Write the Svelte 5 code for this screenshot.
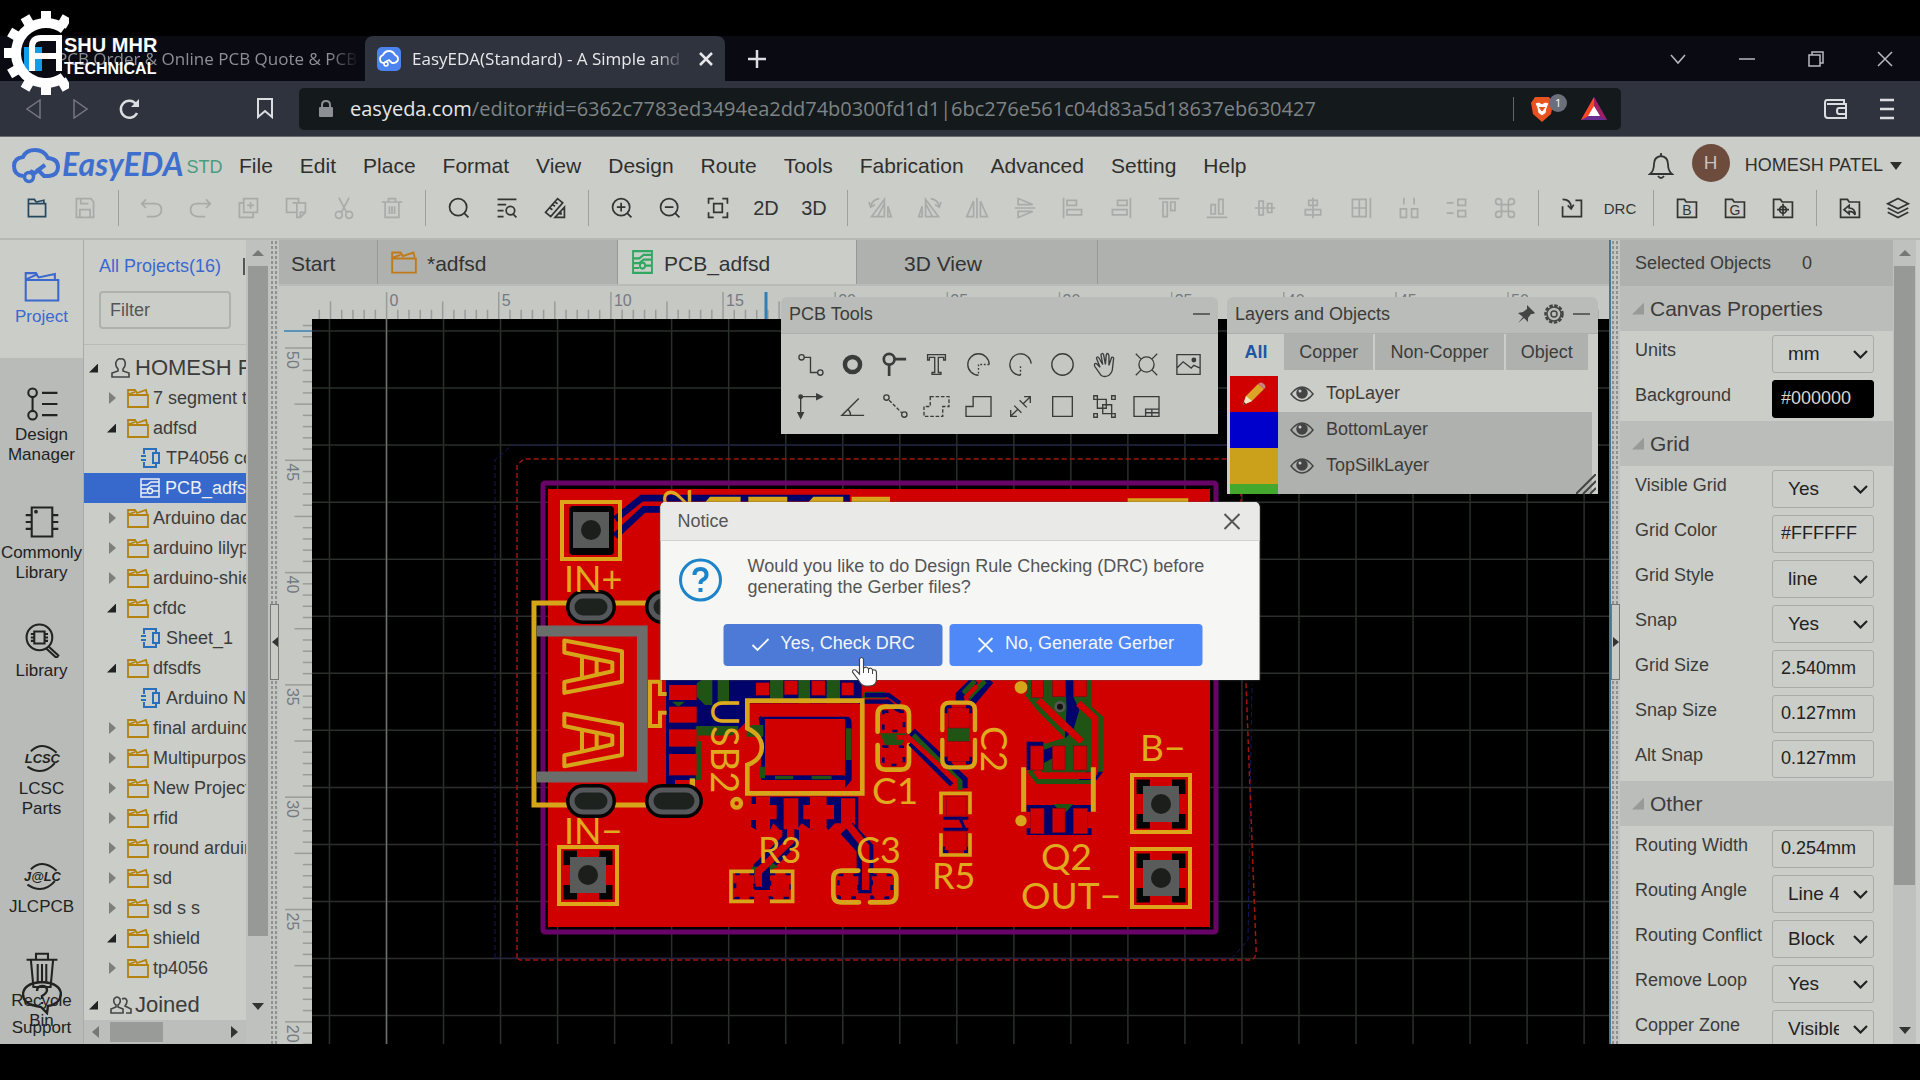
<script>
  const icons = {
    open: '<path d="M4 9V4h7l2 3M4 9h20v15H4zM13 7l9-2v4"/>',
    save: '<path d="M4 3h17l3 4v18H4zM9 3v6h9M8 25v-9h12v9"/>',
    undo: '<path d="M7 4L2 9l5 5M2 9h15q8 0 8 7t-8 8H8"/>',
    redo: '<path d="M21 4l5 5-5 5M26 9H11q-8 0-8 7t8 8h9"/>',
    dup: '<path d="M9 3h16v16H9zM9 8H4v17h16v-6M17 7v8M13 11h8"/>',
    copy: '<path d="M15 19H3V3h14v5M10 8h15v11l-6 6h-4V8M25 19h-6v6"/>',
    cut: '<path d="M8 2l9 17M20 2l-9 17"/><circle cx="8" cy="22" r="4"/><circle cx="20" cy="22" r="4"/>',
    trash: '<path d="M2 7h24M10 7V3h8v4M6 7v18h16V7M11 12v9M14 12v9M17 12v9"/>',
    search: '<circle cx="13" cy="13" r="10"/><path d="M20 20l5 5"/>',
    find: '<path d="M3 4h22M3 10h10M3 17h7M3 24h7"/><circle cx="18" cy="17" r="5"/><path d="M21 21l4 4"/>',
    measure: '<path d="M3 19L17 3l6 5L9 24zM14 7l3 2M11 10l3 2M8 14l3 2M25 13v12H14zM21 19v2h-2"/>',
    zin: '<circle cx="13" cy="13" r="10"/><path d="M20 20l5 5M13 8v10M8 13h10"/>',
    zout: '<circle cx="13" cy="13" r="10"/><path d="M20 20l5 5M8 13h10"/>',
    fit: '<path d="M3 9V3h6M19 3h6v6M25 19v6h-6M9 25H3v-6M9 9h10v10H9z"/>',
    rotl: '<path d="M18 4v20H3zM2 12q2-8 10-9M0 7l2 6 5-3M18 9L10 24h8zM22 12v12h4z"/>',
    rotr: '<path d="M10 24V4l15 20zM26 12q-2-8-10-9M28 7l-2 6-5-3M10 9l8 15h-8zM6 12v12H2z"/>',
    fliph: '<path d="M14 2v24M10 6v18H2zM18 6v18h8z"/>',
    flipv: '<path d="M2 14h24M6 10V3l17 7zM6 18v7l17-7z"/>',
    al: '<path d="M3 2v24M7 5h11v6H7zM7 16h17v6H7z"/>',
    ar: '<path d="M25 2v24M21 5H10v6h11zM21 16H4v6h17z"/>',
    at: '<path d="M2 3h24M7 7h5v17H7zM16 7h5v10h-5z"/>',
    ab: '<path d="M2 25h24M7 21h5V10H7zM16 21h5V4h-5z"/>',
    cv: '<path d="M2 14h24M7 6h5v16H7zM17 9h5v10h-5z"/>',
    ch: '<path d="M14 2v24M9 5h10v6H9zM5 16h18v6H5z"/>',
    gr: '<path d="M4 4h16v20H4zM4 14h16M12 4v20M25 2v24"/>',
    dh: '<path d="M4 15h7v10H4zM17 15h7v10h-7zM8 2v8M20 2v8"/>',
    dv: '<path d="M15 4h9v7h-9zM15 17h9v7h-9zM2 8h8M2 20h8"/>',
    di: '<path d="M10 10h8v8h-8zM10 10H6.500A3.500 3.500 0 1 1 10 6.500zM18 10h3.500A3.500 3.500 0 1 0 18 6.500zM10 18H6.500A3.500 3.500 0 1 0 10 21.500zM18 18h3.500A3.500 3.500 0 1 1 18 21.500z"/>',
    imp: '<path d="M3 12v12h22V5h-7M3 4q10 0 10 10M9 11l4 4 3-5"/>',
    fb: '<path d="M3 25V4h8l2 3h12v18z"/>',
    target: '<path d="M3 25V4h8l2 3h12v18zM14 9v14M7 16h14"/><circle cx="14" cy="16" r="4"/>',
    share: '<path d="M3 25V4h8l2 3h12v18zM13 11l-6 5 6 5v-3q5 0 7 4 0-8-7-8z"/>',
    layers: '<path d="M14 3l12 6-12 6L2 9zM2 14l12 6 12-6M2 19l12 6 12-6"/>',
    track: '<circle cx="4" cy="6" r="3"/><path d="M7 6h7v17h8"/><circle cx="25" cy="23" r="3"/>',
    pad: '<circle cx="14" cy="14" r="8.5" stroke-width="5"/>',
    via: '<g stroke-width="3"><circle cx="8" cy="8" r="6"/><path d="M14 8h13M8 14v13"/></g>',
    text: '<path d="M4 3h20v6h-2V6h-6v17h3v2H9v-2h3V6H6v3H4z"/>',
    arc1: '<path d="M14 26A12 12 0 1 1 26 14"/><path d="M26 14H14V26" stroke-dasharray="2 2"/>',
    arc2: '<path d="M14 26A12 12 0 1 1 26 13"/><path d="M14 26V14" stroke-dasharray="2 2"/>',
    circ: '<circle cx="14" cy="14" r="12"/>',
    hand: '<path d="M10 26L3 16q-1-4 2-3l4 4-4-10q1-3 3 0l4 7-2-11q2-3 3 0l2 11 1-11q2-3 3 1l0 11 3-9q3-1 2 3l-1 9q0 5-4 8-5 3-9 0z"/>',
    hole: '<circle cx="14" cy="14" r="8.5"/><path d="M2 2l6 6M26 2l-6 6M2 26l6-6M26 26l-6-6"/>',
    image: '<path d="M1 3h26v22H1zM1 18l7-7 9 7 3-3 7 3"/><circle cx="20" cy="9" r="2" fill="currentColor"/>',
    axis: '<circle cx="3" cy="3" r="2" fill="currentColor"/><path d="M3 3h22M3 3v22"/><path d="M21 0l6 3-6 3zM0 21l3 6 3-6z" fill="currentColor"/>',
    angle: '<path d="M21 5L2 24h25M9 17q3 3 3 7"/>',
    rats: '<circle cx="5" cy="4" r="3"/><circle cx="25" cy="23" r="3"/><path d="M8 7l14 14" stroke-dasharray="4 2"/>',
    region: '<path d="M7 3h21v11h-7v11H0V14h7z" stroke-dasharray="4 2"/>',
    solid: '<path d="M8 3h20v22H0V14h8z"/>',
    dim: '<path d="M3 25l8-8M17 11l8-8M18 3h7v7M3 18v7h7M7 13l8 8M13 7l8 8"/>',
    rect: '<path d="M3 3h22v22H3z"/>',
    group: '<path d="M6 6h10v10H6zM12 12h10v10H12zM2 2h4v4H2zM22 2h4v4h-4zM2 22h4v4H2zM22 22h4v4h-4z"/>',
    panel: '<path d="M0 3h28v22H0zM13 25v-8h15M13 21h15M20 17v8"/>'
  };

  const toolbar = [
    ['open', 'Open', 1], ['save', 'Save', 0], null,
    ['undo', 'Undo', 0], ['redo', 'Redo', 0], ['dup', 'Duplicate', 0], ['copy', 'Copy', 0], ['cut', 'Cut', 0], ['trash', 'Delete', 0], null,
    ['search', 'Search', 1], ['find', 'Find', 1], ['measure', 'Measure', 1], null,
    ['zin', 'Zoom in', 1], ['zout', 'Zoom out', 1], ['fit', 'Fit', 1], ['', '2D', 1], ['', '3D', 1], null,
    ['rotl', 'Rotate left', 0], ['rotr', 'Rotate right', 0], ['fliph', 'Flip horizontal', 0], ['flipv', 'Flip vertical', 0],
    ['al', 'Align left', 0], ['ar', 'Align right', 0], ['at', 'Align top', 0], ['ab', 'Align bottom', 0], ['cv', 'Align middle', 0],
    ['ch', 'Align center', 0], ['gr', 'Align grid', 0], ['dh', 'Distribute horizontally', 0], ['dv', 'Distribute vertically', 0], ['di', 'Distribute array', 0], null,
    ['imp', 'Import changes', 1], ['', 'DRC', 1], null,
    ['fb', 'BOM', 1, 'B'], ['fb', 'Gerber', 1, 'G'], ['target', 'Pick and place', 1], null,
    ['share', 'Share', 1], ['layers', 'Layers', 1]
  ];
  const menus = ['File', 'Edit', 'Place', 'Format', 'View', 'Design', 'Route', 'Tools', 'Fabrication', 'Advanced', 'Setting', 'Help'];
  const pcbTools = ['track', 'pad', 'via', 'text', 'arc1', 'arc2', 'circ', 'hand', 'hole', 'image', 'axis', 'angle', 'rats', 'region', 'solid', 'dim', 'rect', 'group', 'panel'];

  const railItems = [
    { label: 'Project', icon: '<path d="M2 38V6h12l3 5 19-4v7M2 14h38v24H2zM3 13L14 8"/>' },
    { label: 'Design Manager', icon: '<circle cx="10" cy="8" r="5"/><circle cx="10" cy="34" r="5"/><path d="M10 13v16M21 8h18M21 21h18M21 34h18"/>' },
    { label: 'Commonly Library', icon: '<path d="M9 4h24v34H9zM2 13h7M2 21h7M2 29h7M33 13h7M33 21h7M33 29h7"/><circle cx="14" cy="9" r="1"/>' },
    { label: 'Library', icon: '<circle cx="18" cy="18" r="15"/><path d="M29 29l11 10-2 3L26 31M12 11h12v14H12zM8 14h4M8 18h4M8 22h4M24 14h4M24 18h4M24 22h4"/>' },
    { label: 'LCSC Parts', icon: '<path d="M8 13Q22 0 38 15M4 31q18 12 32-4"/><text x="1" y="27">LCSC</text>' },
    { label: 'JLCPCB', icon: '<path d="M8 13Q22 0 38 15M4 31q18 12 32-4"/><text x="0" y="27">J@LC</text>' },
    { label: 'Recycle Bin', icon: '<path d="M3 9h36M14 9V2h14v7M8 9l3 32h20l3-32M16 14v22M21 14v22M26 14v22"/>' }
  ];

  const tree = [
    ['root', 'HOMESH PATEL', 1], ['dir', '7 segment timer', 0], ['dir', 'adfsd', 1], ['sch', 'TP4056 copy'], ['pcb', 'PCB_adfsd'],
    ['dir', 'Arduino dac', 0], ['dir', 'arduino lilypad', 0], ['dir', 'arduino-shield', 0], ['dir', 'cfdc', 1], ['sch', 'Sheet_1'],
    ['dir', 'dfsdfs', 1], ['sch', 'Arduino Nano'], ['dir', 'final arduino', 0], ['dir', 'Multipurpose', 0], ['dir', 'New Project', 0],
    ['dir', 'rfid', 0], ['dir', 'round arduino', 0], ['dir', 'sd', 0], ['dir', 'sd s s', 0], ['dir', 'shield', 1], ['dir', 'tp4056', 0], ['team', 'Joined', 1]
  ];

  const groups = [
    ['Canvas Properties', [['Units', 'mm', 's'], ['Background', '#000000', 'dark']]],
    ['Grid', [['Visible Grid', 'Yes', 's'], ['Grid Color', '#FFFFFF'], ['Grid Style', 'line', 's'], ['Snap', 'Yes', 's'], ['Grid Size', '2.540mm'], ['Snap Size', '0.127mm'], ['Alt Snap', '0.127mm']]],
    ['Other', [['Routing Width', '0.254mm'], ['Routing Angle', 'Line 45', 's'], ['Routing Conflict', 'Block', 's'], ['Remove Loop', 'Yes', 's'], ['Copper Zone', 'Visible', 's']]]
  ];

  const layers = [['TopLayer', 'red'], ['BottomLayer', 'blue'], ['TopSilkLayer', 'gold'], ['', 'green']];

  const range = (a, b) => Array.from({ length: b - a + 1 }, (_, i) => a + i);
  const tick = (i, base) => (i % 10 === 0 ? base : i % 5 === 0 ? base * 0.65 : base * 0.34);
  const xTicks = range(-6, 108).map((i) => ({ p: 386.6 + 11.215 * i, n: tick(i, 27), label: i % 10 === 0 ? i / 2 : null }));
  const yTicks = range(-2, 62).map((i) => ({ p: 348 + 11.23 * i, n: tick(i, 27), label: i % 10 === 0 ? 50 - i / 2 : null }));
  const gridX = range(-1, 21).map((k) => 386.5 + 57.03 * k);
  const gridY = range(0, 12).map((k) => 331 + 57.05 * k);

  const pads = [
    { x: 560, y: 500, w: 62, h: 61, px: 573, py: 512, solid: true },
    { x: 557, y: 845, w: 62, h: 61, px: 570, py: 857 },
    { x: 1130, y: 773, w: 62, h: 61, px: 1143, py: 786 },
    { x: 1130, y: 847, w: 62, h: 62, px: 1143, py: 860 }
  ];
  const slots = [[591, 607, 42], [674, 607, 50], [591, 801, 42], [674, 801, 50]];
  const silk = [
    ['IN+', 564, 592, 36], ['IN−', 564, 844, 36], ['C1', 872, 804, 37], ['C3', 856, 863, 36], ['R3', 758, 863, 36],
    ['R5', 932, 889, 36], ['Q2', 1041, 870, 37], ['OUT−', 1021, 909, 37], ['B−', 1140, 761, 37]
  ];
</script>

{#snippet icon(name, size = 28)}
  <svg class="ico" width={size} height={size} viewBox="0 0 28 28">{@html icons[name]}</svg>
{/snippet}

{#snippet folder()}
  <svg class="folder" width="22" height="20" viewBox="0 0 22 20"><path d="M1 19V2h7l2 3 9-3 1 4M1 7h20v12H1zM2 6l6-2" /></svg>
{/snippet}

{#snippet pcbIcon()}
  <svg class="pcbi" width="21" height="24" viewBox="0 0 20 20" preserveAspectRatio="none"><path d="M1 1h18v18H1zM1 7h6l4-3h8M1 11h6l4-3h8M1 15h6M13 13h6" /><circle cx="10" cy="13" r="2.500" /></svg>
{/snippet}

<div class="page">
  <header class="browser">
    <div class="strip">
      <div class="tab back"><span class="fav"></span><span class="ttl">PCB Order &amp; Online PCB Quote &amp; PCB Assembly</span></div>
      <div class="tab front">
        <svg width="24" height="24" viewBox="0 0 24 24"><rect width="24" height="24" rx="5" fill="#4d83ee" /><path d="M7 16q-4 0-4-4 0-3 3-4 2-4 6-4t6 4q3 1 3 4t-4 4h-2l-3-3-4 2" fill="none" stroke="#fff" stroke-width="1.800" /><circle cx="9" cy="17" r="2" fill="none" stroke="#fff" stroke-width="1.500" /></svg>
        <span class="ttl">EasyEDA(Standard) - A Simple and Powerful</span>
        <button aria-label="Close tab"><svg width="14" height="14" viewBox="0 0 14 14"><path d="M1 1l12 12M13 1L1 13" stroke-width="2.500" /></svg></button>
      </div>
      <button class="plus" aria-label="New tab"><svg width="18" height="18" viewBox="0 0 18 18"><path d="M9 0v18M0 9h18" stroke-width="2.500" /></svg></button>
      <div class="win">
        <button aria-label="Tab list"><svg width="16" height="16" viewBox="0 0 16 16"><path d="M1 4l7 8 7-8" /></svg></button>
        <button aria-label="Minimize"><svg width="16" height="16" viewBox="0 0 16 16"><path d="M0 8h16" /></svg></button>
        <button aria-label="Restore"><svg width="16" height="16" viewBox="0 0 16 16"><path d="M1 4h11v11H1zM4 4V1h11v11h-3" /></svg></button>
        <button aria-label="Close"><svg width="16" height="16" viewBox="0 0 16 16"><path d="M1 1l14 14M15 1L1 15" /></svg></button>
      </div>
    </div>
    <nav class="nav">
      <button class="dim" aria-label="Back"><svg width="16" height="20" viewBox="0 0 16 20"><path d="M14 1v18L1 10z" /></svg></button>
      <button class="dim" aria-label="Forward"><svg width="16" height="20" viewBox="0 0 16 20"><path d="M2 1v18l13-9z" /></svg></button>
      <button aria-label="Reload"><svg width="22" height="22" viewBox="0 0 22 22"><path d="M19 15a8.500 8.500 0 1 1-1-9" stroke-width="2.500" /><path d="M21 1v8h-8z" fill="#dcdde0" stroke="none" /></svg></button>
      <button class="mark" aria-label="Bookmark"><svg width="16" height="21" viewBox="0 0 16 21"><path d="M1 1h14v18l-7-6-7 6z" stroke-width="2" /></svg></button>
      <div class="url">
        <svg width="14" height="17" viewBox="0 0 14 17"><path d="M3 8V5q0-4 4-4t4 4v3" stroke="#8c9094" stroke-width="2" fill="none" /><rect y="7" width="14" height="10" rx="1" fill="#8c9094" /></svg>
        <span class="addr"><b>easyeda.com</b>/editor#id=6362c7783ed3494ea2dd74b0300fd1d1|6bc276e561c04d83a5d18637eb630427</span>
        <span class="bar"></span>
        <svg class="lion" width="38" height="30" viewBox="0 0 38 30"><path d="M4 3h14l4 6-2 11-9 8-9-8L0 9z" fill="#e8521f" /><path d="M4 9l4-1 3 2 3-2 4 1-2 5-1 5-4 3-4-3-1-5zM8 13l3 4 3-4" fill="#fff" stroke="#e8521f" /><circle cx="27" cy="9" r="9" fill="#6b6f7a" /><text x="24" y="13" font-size="11" fill="#fff">1</text></svg>
        <svg width="26" height="24" viewBox="0 0 26 24"><path d="M13 0L0 23h26z" fill="#6a2d91" /><path d="M13 0L0 23l13-7z" fill="#ff4724" /><path d="M13 0l13 23-13-7z" fill="#9e1f63" /><path d="M13 9l-6 10h12z" fill="#fff" /></svg>
      </div>
      <div class="navright">
        <button aria-label="Wallet"><svg width="24" height="21" viewBox="0 0 24 21"><path d="M20 6V2H3Q1 2 1 5v12q0 3 3 3h18V6H3M22 10h-7q-2 0-2 3t2 3h7" stroke-width="2" /></svg></button>
        <button aria-label="Menu"><svg width="16" height="22" viewBox="0 0 16 22"><path d="M1 2h14M1 11h14M1 20h14" stroke-width="2.500" /></svg></button>
      </div>
    </nav>
  </header>

  <div class="head">
    <div class="menurow">
      <div class="brand">
        <svg width="48" height="36" viewBox="0 0 48 36"><path d="M11 28Q2 27 2 18q0-8 9-9Q14 2 23 2q9 0 13 8 10 1 10 9 0 8-9 9h-5l-6-6 7-5-10 8-5-2" fill="none" stroke="#3f6fce" stroke-width="4" /><circle cx="17" cy="29" r="4.500" fill="none" stroke="#3f6fce" stroke-width="3.500" /></svg>
        <span class="name">EasyEDA</span><span class="std">STD</span>
      </div>
      <div class="menus">{#each menus as m}<button>{m}</button>{/each}</div>
      <div class="user">
        <svg width="26" height="28" viewBox="0 0 26 28"><path d="M2 22q4-3 4-10 0-7 7-8 7 1 7 8 0 7 4 10zM13 4V1M10 24q3 4 6 0" fill="none" stroke="#333" stroke-width="1.800" /></svg>
        <span class="ava">H</span><button>HOMESH PATEL</button><i class="caret"></i>
      </div>
    </div>
    <div class="toolbar">
      {#each toolbar as t}
        {#if t}
          <button class:off={!t[2]} class:small={t[1] === 'DRC'} class:teal={t[0] === 'open'} aria-label={t[1]}>
            {#if t[0]}{@render icon(t[0])}{#if t[3]}<span class="in">{t[3]}</span>{/if}{:else}{t[1]}{/if}
          </button>
        {:else}<span class="sep"></span>{/if}
      {/each}
    </div>
  </div>

  <main class="work">
    <aside class="rail">
      {#each railItems as r, i}
        <button class:on={i === 0} class:last={i === 6}>
          <svg width="40" height="36" viewBox="0 0 42 42">{@html r.icon}</svg><span>{r.label}</span>
        </button>
      {/each}
      <button class="support">
        <svg width="40" height="34" viewBox="0 0 40 34"><path d="M14 25Q1 23 1 13 2 2 20 1q18 1 19 12-1 10-13 12l-1 7-6-6zM15 10q0-5 5-5t5 4q0 3-5 6v3M20 21v2" /></svg><span>Support</span>
      </button>
    </aside>

    <section class="side">
      <div class="filter"><a href="#all">All Projects(16)</a><i></i><input aria-label="Filter" placeholder="Filter" /></div>
      <ul>
        {#each tree as [kind, label, open]}
          <li class={kind}>
            {#if open !== undefined}<i class={open ? 'tri open' : 'tri'}></i>{/if}
            {#if kind === 'dir'}{@render folder()}
            {:else if kind === 'sch'}<svg class="schi" width="20" height="22" viewBox="0 0 20 22"><path d="M3 7V2h12v4M3 15v5h12v-4M0 9h5M0 13h5M12 6h6v10h-6z" /></svg>
            {:else if kind === 'pcb'}{@render pcbIcon()}
            {:else if kind === 'root'}<svg class="man" width="19" height="20" viewBox="0 0 19 20"><path d="M7 11Q4 8 5 4q2-4 4.500-3Q13 0 14 4q1 4-2 7v2l6 2v4H1v-4l6-2z" /></svg>
            {:else}<svg class="man" width="22" height="18" viewBox="0 0 22 18"><path d="M6 9Q3 7 4 3q3-4 6 0 1 4-2 6v2l5 2v4H1v-4l5-2zM12 3q4-2 5 2 0 3-2 5l6 3v4h-5" /></svg>{/if}
            <span>{label}</span>
          </li>
        {/each}
      </ul>
      <div class="hbar"><i class="l"></i><b></b><i class="r"></i></div>
    </section>
    <div class="vbar left"><i class="u"></i><b></b><i class="d"></i></div>
    <div class="split"><span class="toleft"></span></div>

    <section class="editor">
      <div class="tabs">
        <button class="t1">Start</button>
        <button class="t2">{@render folder()}*adfsd</button>
        <button class="t3">{@render pcbIcon()}PCB_adfsd</button>
        <button class="t4">3D View</button>
      </div>
      <div class="stage">
        <svg class="canvas" width="100%" height="100%">
          <g transform="translate(-279 -286)">
            <g stroke="#9a9c99" stroke-width="1.500">
              {#each xTicks as t}<path d={`M${t.p} ${319 - t.n}V319`} />{/each}
              {#each yTicks as t}<path d={`M${312 - t.n} ${t.p}H312`} />{/each}
            </g>
            <path d="M766 292V319" stroke="#2f7fb8" stroke-width="3" />
            <path d="M284 331H312" stroke="#5a94ba" stroke-width="2" />
            <g class="num">
              {#each xTicks as t}{#if t.label !== null}<text x={t.p + 3} y="306">{t.label}</text>{/if}{/each}
              {#each yTicks as t}{#if t.label !== null}<text transform={`translate(287 ${t.p + 3}) rotate(90)`}>{t.label}</text>{/if}{/each}
            </g>
            <rect x="312" y="319" width="4000" height="3000" fill="#000" />
            <g stroke="#2a2f2b" stroke-width="1.500">
              {#each gridX as x}<path d={`M${x} 319V2400`} />{/each}
              {#each gridY as y}<path d={`M312 ${y}H2400`} />{/each}
              <path d="M386.500 319V2400" stroke="#6a6f6b" />
            </g>
            <path d="M495 958V460L512 445H1240M495 958H1232L1248 940L1252 684" fill="none" stroke="#16165c" stroke-dasharray="5 3" />
            <path d="M517 958V465L524 459H1235L1241 465V560L1246 683L1256 947Q1257 960 1250 960H520Z" fill="none" stroke="#a01510" stroke-width="1.500" stroke-dasharray="5 3" />
            <rect x="543" y="483" width="673" height="449" rx="2" fill="none" stroke="#680468" stroke-width="5" />
            <rect x="548" y="489" width="662" height="438" fill="#d10000" />

            <g transform="translate(500 440) scale(.3333 .338)" fill="none">
              <path d="M345 235L425 172H1050M345 285L432 205H480" stroke="#02026b" stroke-width="20" />
              <path d="M610 190L630 168H722V190ZM745 168H862V190H745ZM920 190L940 168H1030V190ZM1055 168H1170V190H1055Z" fill="#d6a51a" />
              <path d="M535 482H102V1080H535" stroke="#d6a51a" stroke-width="15" />
              <path d="M110 565H427V997H110" stroke="#6a6d69" stroke-width="32" />
              {#each [0, 217] as dy}
                <g transform={`translate(0 ${dy})`} stroke="#d6a51a" stroke-width="12" stroke-linejoin="round">
                  <path d="M193 593L366 625V715L193 748V716L246 705V640L193 629Z" />
                  <path d="M246 640L337 658V684L246 705M290 650V694" />
                </g>
              {/each}
            </g>

            <g transform="translate(655 670) scale(.3333)">
              <path d="M33 30H620V110H275V170L240 205H130V330H60V360H33Z" fill="#02026b" />
              <path d="M140 30H172V105H150L125 80V40ZM188 30H222V105H188ZM345 30H385V85H345ZM430 30H465V110H430ZM515 30H555V110H515ZM125 168H250V198H125ZM122 170H140V330H122ZM50 95H90L70 110ZM630 65H690V85H620Z" fill="#1f5414" />
              <path d="M145 222H290V340H145Z" fill="#d10000" />
              <path d="M275 100H620V370H275V285Q330 260 325 220Q320 180 275 170Z" fill="#d10000" />
              <path d="M308 125L318 140H580Q590 145 590 160V330L570 355V330H318V190Z" fill="#02026b" />
              <path d="M275 165H325V200H275ZM315 290H330V325H315ZM360 318H415V328H360ZM470 318H530V328H470ZM573 175H590V270H573Z" fill="#1f5414" />
              <path d="M130 205H235L318 125H575Q600 130 600 160V340" fill="none" stroke="#d10000" stroke-width="17" />
              <rect x="330" y="147" width="240" height="169" fill="#d10000" />
              {#each [[42, 45, 83, 45], [42, 110, 83, 48], [42, 178, 83, 52], [42, 252, 83, 64], [303, 38, 40, 38], [388, 32, 40, 42], [470, 32, 40, 44], [560, 38, 36, 38]] as p}
                <rect x={p[0]} y={p[1]} width={p[2]} height={p[3]} fill="#d10000" />
              {/each}
              <path d="M0 35H15V72H35M35 128H15V168H-15V35H0" fill="none" stroke="#d6a51a" stroke-width="12" />
              <path d="M610 95H700L740 130M630 75H700L735 100" fill="none" stroke="#02026b" stroke-width="13" />
              <path d="M277 92H622V370H277V285C335 265 335 200 277 175Z" fill="none" stroke="#d6a51a" stroke-width="14" />
              <path d="M290 380H610V478H595L570 460H540L520 480L500 462L470 480L440 460L425 480H375L355 460L345 480L320 462L305 480L288 470Z" fill="#02026b" />
              <path d="M286 402H303V450H286ZM303 380H345V405H365V448H345V478H303ZM386 385H430V478H386ZM445 405H465V380H515V405H537V448H515V478H465V448H445ZM558 385H600V470H558Z" fill="#d10000" />
              <path d="M407 480V510L320 595V660M575 475L630 535V670" fill="none" stroke="#02026b" stroke-width="50" />
              <path d="M290 590H315V620H290ZM340 570L370 590L345 600Z" fill="#1f5414" />
              <path d="M407 465V512L310 605V650M580 465L632 530V660" fill="none" stroke="#d10000" stroke-width="22" />
              {#each [[240, 612, 58, 72], [345, 612, 62, 72], [550, 615, 60, 68], [650, 615, 60, 68], [685, 125, 62, 58], [685, 230, 62, 55]] as p}
                <rect x={p[0]} y={p[1]} width={p[2]} height={p[3]} fill="#d10000" stroke="#02026b" stroke-width="8" stroke-dasharray={`${p[2] / 4} ${p[2] / 2}`} />
              {/each}
              <path d="M675 190H755L740 225H690Z" fill="#1f5414" />
              <path d="M297 604H228V694H297M345 604H413V694H345" fill="none" stroke="#d6a51a" stroke-width="11" />
              <path d="M610 602H560Q535 602 535 625V672Q535 697 560 697H612M645 602H698Q724 602 724 625V672Q724 697 698 697H645M668 185V135Q668 110 692 110H738Q762 110 762 135V185M668 225V275Q668 299 692 299H738Q762 299 762 275V225" fill="none" stroke="#d6a51a" stroke-width="14" stroke-linecap="round" />
              <circle cx="245" cy="400" r="13" fill="none" stroke="#d6a51a" stroke-width="13" />
              <path d="M112 325V352" stroke="#d6a51a" stroke-width="16" />
            </g>

            <g transform="translate(860 480) scale(.3333)">
              <path d="M803 55H985V70H803Z" fill="#d6a51a" />
              <path d="M155 755L310 900V925M300 668V645L345 600M390 600L335 665" fill="none" stroke="#02026b" stroke-width="26" />
              <path d="M150 790L275 915" stroke="#02026b" stroke-width="14" />
              <path d="M160 765L300 905V930M345 603L310 640M375 603L325 655" fill="none" stroke="#1f5414" stroke-width="15" />
              <path d="M110 772H145L290 905M350 618L315 655" fill="none" stroke="#d10000" stroke-width="14" />
              <path d="M262 740H330V785H262Z" fill="#1f5414" />
              <path d="M550 600H695V680L730 710V870L700 912H530L505 880V790H560L640 760L540 680L500 640V600Z" fill="#1f5414" />
              <path d="M535 680L625 770L560 790H500V700Z" fill="#d10000" />
              <path d="M500 640L540 690L625 775" fill="none" stroke="#1f5414" stroke-width="14" />
              <path d="M615 600H640V650L658 690L640 750L615 775L620 680ZM500 785H550V800H515V870H500ZM550 810L578 800V835L550 850ZM655 900H710L730 875H680Z" fill="#02026b" />
              <path d="M535 660L665 785M655 670L705 715V865Q705 885 690 887H540L528 870" fill="none" stroke="#d10000" stroke-width="20" />
              <path d="M500 975H695V1065H500Z" fill="#02026b" /><path d="M580 972H640L610 1005Z" fill="#1f5414" />
              <path d="M495 995H515V1045H495ZM680 995H700V1045H680Z" fill="#d10000" />
              {#each [[515, 600, 36, 52], [578, 600, 38, 50], [642, 600, 38, 50], [512, 798, 38, 72], [578, 798, 37, 72], [640, 798, 40, 72], [512, 985, 40, 76], [578, 985, 37, 72], [640, 985, 42, 76], [265, 682, 65, 62], [262, 785, 68, 60], [260, 950, 58, 58], [257, 1055, 62, 58]] as p}
                <rect x={p[0]} y={p[1]} width={p[2]} height={p[3]} fill="#d10000" stroke="#8d0018" stroke-width="2" />
              {/each}
              <path d="M250 1015H325M250 1048H325M300 1015L315 1048M250 1100V1115H265M312 1115H325V1100" fill="none" stroke="#02026b" stroke-width="9" />
              <path d="M258 700V680H275M318 680H332V700M258 830V848H275M318 848H332V830" fill="none" stroke="#02026b" stroke-width="9" />
              <circle cx="600" cy="680" r="13" fill="#111" stroke="#555855" stroke-width="8" />
              <path d="M247 750V690Q247 668 270 668H322Q345 668 345 690V750M247 780V840Q247 862 270 862H322Q345 862 345 840V780" fill="none" stroke="#d6a51a" stroke-width="13" stroke-linecap="round" />
              <path d="M243 1003V940H330V1003M243 1060V1125H330V1060" fill="none" stroke="#d6a51a" stroke-width="11" />
              <path d="M491 862V995M700 862V995" stroke="#d6a51a" stroke-width="15" />
              <circle cx="483" cy="622" r="19" fill="#d6a51a" /><circle cx="483" cy="1022" r="17" fill="#d6a51a" />
            </g>

            {#each slots as [x, y, w]}
              <rect x={x - w / 2 - 4} y={y - 17} width={w + 8} height="34" rx="17" fill="#050505" />
              <rect x={x - w / 2 + 2} y={y - 11} width={w - 4} height="22" rx="11" fill="#1e221e" stroke="#55575a" stroke-width="5" />
            {/each}
            {#each pads as p}
              <rect x={p.x + 2} y={p.y + 2} width={p.w - 4} height={p.h - 4} fill="none" stroke="#dca51a" stroke-width="4" />
              {#if p.solid}<rect x={p.px - 4} y={p.py - 6} width="45" height="49" rx="4" fill="#050505" />
              {:else}<path d={`M${p.px - 3} ${p.py + 8}v-11h10M${p.px + 29} ${p.py - 3}h10v11M${p.px + 39} ${p.py + 28}v11h-10M${p.px + 7} ${p.py + 39}h-10v-11`} fill="none" stroke="#050505" stroke-width="7" />{/if}
              <rect x={p.px} y={p.py} width="36" height="36" fill="#595b5a" /><circle cx={p.px + 18} cy={p.py + 18} r="10" fill="#1b1e1b" />
            {/each}
            <g class="silk">
              {#each silk as [s, x, y, f]}<text {x} {y} font-size={f}>{s}</text>{/each}
              <text transform="translate(711 698) rotate(90)" font-size="38">USB2</text>
              <text transform="translate(981 726) rotate(90)" font-size="37">C2</text>
              <text transform="translate(691 510) rotate(-90)" font-size="38">2</text>
            </g>
          </g>
        </svg>

        <div class="float tools">
          <div class="fh"><span>PCB Tools</span><button aria-label="Collapse tools"><svg width="17" height="4"><path d="M0 2h17" /></svg></button></div>
          <div class="grid">{#each pcbTools as t}<button aria-label={t}>{@render icon(t)}</button>{/each}</div>
        </div>

        <div class="float lay">
          <div class="fh">
            <span>Layers and Objects</span>
            <button aria-label="Pin"><svg width="18" height="18" viewBox="0 0 18 18"><path d="M10 0l8 8-2 1-2 0-3 4 0 4-4-4-6 5 5-6-5-4 5-1 4-3z" fill="#444" stroke="none" /></svg></button>
            <button aria-label="Layer settings"><svg width="20" height="20" viewBox="0 0 20 20"><circle cx="10" cy="10" r="8.500" stroke-dasharray="3.500 1.500" stroke-width="2.500" /><circle cx="10" cy="10" r="7" /><circle cx="10" cy="10" r="3" /></svg></button>
            <button aria-label="Collapse layers"><svg width="17" height="4"><path d="M0 2h17" /></svg></button>
          </div>
          <div class="ltabs"><button class="on">All</button><button>Copper</button><button>Non-Copper</button><button>Object</button></div>
          <div class="rows">
            {#each layers as [name, c], i}
              <div class="row" class:act={i === 0}>
                <span class={'sw ' + c}>
                  {#if i === 0}<svg width="26" height="26" viewBox="0 0 26 26"><path d="M2 24l3-9L17 3l6 5L11 20z" fill="#dba628" /><path d="M17 3q3-3 6 0t0 5z" fill="#c98080" /><path d="M2 24l3-9 6 5z" fill="#eee6c8" /><path d="M2 24l1-3 2 2z" fill="#222" /></svg>{/if}
                </span>
                {#if name}
                  <svg class="eye" width="24" height="16" viewBox="0 0 24 16"><path d="M1 8q11-14 22 0-11 14-22 0z" /><circle cx="12" cy="7" r="5" fill="#444" /><circle cx="10" cy="5" r="1.500" fill="#ccc" stroke="none" /></svg>
                  <span class="ln">{name}</span>
                {/if}
              </div>
            {/each}
          </div>
          <svg class="grip" width="20" height="20" viewBox="0 0 20 20"><path d="M0 20L20 0M7 20L20 7M14 20l6-6" /></svg>
        </div>
      </div>
    </section>

    <div class="split"><span class="toright"></span></div>
    <aside class="props">
      <div class="sel"><span>Selected Objects</span><span>0</span></div>
      {#each groups as [title, rows]}
        <h3><i></i>{title}</h3>
        {#each rows as [label, value, type]}
          <label class="prop"><span>{label}</span>
            {#if type === 's'}
              <span class="dd"><select><option>{value}</option></select><svg width="15" height="9" viewBox="0 0 15 9"><path d="M1 1l6.500 6.500L14 1" /></svg></span>
            {:else}<input class={type} {value} />{/if}
          </label>
        {/each}
      {/each}
    </aside>
    <div class="vbar right"><i class="u"></i><b></b><i class="d"></i></div>
  </main>

  <div class="dialog" role="dialog" aria-label="Notice">
    <div class="dh"><span>Notice</span><button aria-label="Close notice"><svg width="17" height="17" viewBox="0 0 17 17"><path d="M1 1l15 15M16 1L1 16" /></svg></button></div>
    <div class="msg">
      <svg width="44" height="44" viewBox="0 0 44 44"><circle cx="22" cy="22" r="20" /><path d="M16 17q0-6 6-6t6 6q0 3-4 5-2 1-2 4M22 30v4" stroke-width="4" /></svg>
      <p>Would you like to do Design Rule Checking (DRC) before generating the Gerber files?</p>
    </div>
    <div class="acts">
      <button class="yes"><svg width="18" height="14" viewBox="0 0 18 14"><path d="M1 7l5 5L17 1" /></svg>Yes, Check DRC</button>
      <button class="no"><svg width="16" height="16" viewBox="0 0 16 16"><path d="M1 1l14 14M15 1L1 15" /></svg>No, Generate Gerber</button>
    </div>
    <svg class="cursor" width="27" height="31" viewBox="0 0 27 31"><path d="M9 3q2-3 4 0v9q4-2 5 1 3-2 4 1 4-1 4 3v6q0 7-7 7h-4q-4 0-7-6l-6-8q0-3 3-2l4 4z" fill="#fff" stroke="#444" stroke-width="1.200" /><path d="M13 12v5M18 13v4M22 14v4" stroke="#444" /></svg>
  </div>

  <div class="mark-logo">
    <svg width="66" height="86" viewBox="0 0 66 86">
      <circle cx="43" cy="43" r="30" fill="none" stroke="#fff" stroke-width="10" stroke-dasharray="132 57" transform="rotate(54 43 43)" />
      {#each [60, 90, 120, 150, 180, 210, 240, 270, 300] as a}<path d="M74 38h11v10h-11z" fill="#fff" transform={`rotate(${a} 43 43)`} />{/each}
      <path d="M29 61V37q0-9 9-9h18v33M29 46h27" fill="none" stroke="#fff" stroke-width="6" />
    </svg>
    <div class="words"><span>SHU MHR</span><span class="w2">TECHNICAL</span></div>
  </div>
</div>

<style>
  :global(body) { background: #000; }
  * { box-sizing: border-box; }
  .page { position: relative; display: flex; flex-direction: column; height: 100vh; min-height: 600px; padding: 36px 0; overflow: hidden; background: #000; color: #3b3c3a; font: 18px "Liberation Sans", Arial, sans-serif; }
  button { border: 0; padding: 0; background: none; color: inherit; font: inherit; white-space: nowrap; }
  svg { flex: none; display: block; }
  .ico { fill: none; stroke: currentColor; stroke-width: 1.800; overflow: visible; }

  .browser { flex: none; font-family: "Open Sans", "Noto Sans", sans-serif; color: #dcdde0; }
  .browser button svg { fill: none; stroke: currentColor; stroke-width: 1.500; }
  .strip { display: flex; align-items: center; height: 45px; background: #0a0a13; }
  .tab { display: flex; align-items: center; height: 45px; font-size: 17px; }
  .ttl { flex: 1; overflow: hidden; white-space: nowrap; -webkit-mask-image: linear-gradient(90deg, #000 90%, transparent); mask-image: linear-gradient(90deg, #000 90%, transparent); }
  .back { width: 365px; padding: 0 6px 0 24px; gap: 15px; color: #8d8f96; }
  .fav { width: 18px; height: 24px; background: #129be8; }
  .front { width: 360px; padding: 0 12px; gap: 11px; border-radius: 8px 8px 0 0; background: #2f333e; font-weight: 500; color: #e8e8ea; }
  .front button { margin-left: 4px; }
  .plus { margin-left: 23px; }
  .win { display: flex; margin-left: auto; gap: 53px; padding-right: 27px; color: #b9bac0; }
  .nav { display: flex; align-items: center; height: 56px; padding: 0 25px 0 26px; gap: 30px; background: #2f333e; border-bottom: 1px solid #666a70; }
  .dim { color: #74777f; }
  .mark { margin-left: 87px; }
  .url { display: flex; align-items: center; flex: 1; height: 42px; padding: 0 14px 0 20px; gap: 12px; border-radius: 5px; background: #14191b; font-size: 20px; color: #7e8385; min-width: 0; margin-left: -4px; }
  .addr { flex: 1; margin-left: 5px; overflow: hidden; white-space: nowrap; }
  .addr b { font-weight: 400; color: #e6e7e8; }
  .bar { width: 1px; height: 24px; margin-right: 5px; background: #63676b; }
  .navright { display: flex; justify-content: flex-end; gap: 31px; width: 240px; margin-left: 4px; }

  .head { flex: none; height: 103px; background: #cbcdc9; border-bottom: 2px solid #b6b8b5; }
  .menurow { display: flex; align-items: center; height: 54px; padding: 3px 18px 0 12px; font-size: 21px; color: #2f302e; }
  .brand { display: flex; align-items: center; width: 227px; }
  .name { margin: 0 0 4px 2px; color: #3f6fce; font: italic 700 32px Lato, sans-serif; }
  .std { margin: 4px 0 0 3px; font-size: 18px; color: #4a9c80; }
  .menus { display: flex; gap: 27px; }
  .user { display: flex; align-items: center; margin-left: auto; font-size: 18px; }
  .ava { width: 38px; height: 38px; margin: 0 15px 5px 18px; border-radius: 50%; background: #6d4b3d; color: #c9c3bd; line-height: 38px; text-align: center; font-size: 19px; }
  .caret { margin-left: 7px; border: 6px solid transparent; border-top: 8px solid #2f302e; border-bottom: 0; }
  .toolbar { display: flex; align-items: center; height: 34px; padding-left: 13px; color: #333533; }
  .toolbar button { position: relative; display: flex; flex: none; align-items: center; justify-content: center; width: 48px; height: 34px; font-size: 20px; }
  .toolbar .ico { width: 24px; height: 24px; stroke-width: 2; }
  .toolbar .off { color: #a9aba8; }
  .toolbar .small { font-size: 15px; }
  .toolbar .teal { color: #27485c; }
  .in { position: absolute; inset: 4px 0 0; font-size: 14px; line-height: 30px; }
  .sep { flex: none; width: 1px; height: 36px; margin: 0 9px; background: #9fa19e; }

  .work { display: flex; flex: 1; min-height: 0; background: #cbcdc9; }
  .rail { position: relative; flex: none; width: 84px; overflow: hidden; background: #b9bbb8; border-right: 1px solid #a9aba8; }
  .rail button { display: flex; flex-direction: column; align-items: center; width: 83px; height: 118px; padding-top: 28px; gap: 3px; white-space: normal; line-height: 20px; font-size: 17px; color: #222; }
  .rail svg { fill: none; stroke: currentColor; stroke-width: 2.400; font: italic 700 15px "Liberation Sans", sans-serif; }
  .rail :global(text) { fill: currentColor; stroke: none; }
  .rail .on { background: #cbcdc9; color: #3b68cf; }
  .rail .last { padding-top: 4px; }
  .rail .support { position: absolute; left: 0; bottom: 0; height: auto; padding: 0 0 6px; }
  .side { display: flex; flex: none; flex-direction: column; width: 162px; overflow: hidden; white-space: nowrap; }
  .filter { position: relative; flex: none; height: 105px; padding: 15px 15px 0; border-bottom: 1px solid #b9bbb8; }
  .filter a { color: #3b68cf; text-decoration: none; line-height: 22px; }
  .filter i { position: absolute; right: 1px; top: 18px; width: 2px; height: 17px; background: #555; }
  .filter input { display: block; width: 132px; height: 38px; margin-top: 14px; padding: 0 9px; border: 2px solid #afb1ae; border-radius: 4px; background: transparent; font: inherit; }
  .filter input::placeholder { color: #555; opacity: 1; }
  ul { flex: 1; min-height: 0; margin: 0; padding: 8px 0 0; list-style: none; overflow: hidden; }
  li { display: flex; align-items: center; height: 30px; }
  .tri { flex: none; width: 9px; margin-left: 25px; margin-right: 9px; border: 6px solid transparent; border-left: 7px solid #7d7f7c; border-right: 0; }
  .tri.open { width: 9px; height: 9px; margin-left: 23px; margin-right: 11px; border: 0; background: #222; clip-path: polygon(100% 0, 100% 100%, 0 100%); }
  .dir span { margin-left: 4px; }
  .folder { fill: none; stroke: #b3820f; stroke-width: 1.800; }
  .schi { margin-left: 57px; margin-right: 5px; fill: none; stroke: #2a6fbd; stroke-width: 2; }
  .pcbi { fill: none; stroke: currentColor; stroke-width: 1.500; }
  li .pcbi { width: 20px; height: 20px; margin-left: 56px; margin-right: 5px; }
  li.pcb { background: #3768cc; color: #eceef2; }
  .root, .team { font-size: 22px; }
  .team { height: 44px; }
  .root .tri.open, .team .tri.open { margin-left: 5px; margin-right: 13px; }
  .man { fill: none; stroke: #444; stroke-width: 1.600; margin-right: 5px; }
  .team .man { margin-left: -1px; margin-right: 3px; }
  .hbar { display: flex; flex: none; align-items: center; height: 24px; padding: 0 8px; background: #bcbebb; }
  .hbar b { width: 53px; height: 20px; margin: 0 auto 0 11px; background: #999b98; }
  .hbar .l, .hbar .r { border: 6px solid transparent; }
  .hbar .l { border-right: 7px solid #777; border-left: 0; }
  .hbar .r { border-left: 7px solid #333; border-right: 0; }
  .vbar { display: flex; flex: none; flex-direction: column; align-items: center; width: 24px; padding: 10px 2px; background: #bfc1be; }
  .vbar b { width: 100%; margin-top: 10px; background: #979996; }
  .vbar i { border: 6px solid transparent; }
  .vbar .u { border-bottom: 6px solid #777; border-top: 0; }
  .vbar .d { margin-top: auto; border-top: 7px solid #333; border-bottom: 0; }
  .left b { flex: 0 1 670px; }
  .left { padding-bottom: 34px; }
  .right b { flex: 0 1 619px; }
  .right { width: 27px; border-right: 4px solid #cbcdc9; padding: 10px 1px; }
  .split { display: flex; flex: none; align-items: center; width: 9px; background: radial-gradient(#8f918e 1px, transparent 1px) 0 0 / 4px 5px #c3c5c2; }
  .split span { display: flex; align-items: center; justify-content: center; width: 9px; height: 76px; border: 1px solid #777; background: #c8cac6; }
  .split span::after { content: ""; border: 5px solid transparent; }
  .split .toleft::after { border-right: 6px solid #333; border-left: 0; }
  .split .toright::after { border-left: 6px solid #333; border-right: 0; }

  .editor { display: flex; flex: 1; flex-direction: column; min-width: 0; border-right: 2px solid #3f7b98; }
  .tabs { display: flex; flex: none; height: 46px; background: #afb1ae; border-bottom: 2px solid #b9bbb8; font-size: 21px; color: #333; }
  .tabs button { display: flex; align-items: center; padding-top: 3px; border-right: 1px solid #969895; }
  .tabs .folder { width: 26px; height: 24px; margin-bottom: 4px; stroke: #c07a1a; stroke-width: 1.600; }
  .tabs .t1 { width: 99px; padding-left: 12px; }
  .tabs .t2 { width: 240px; padding-left: 13px; gap: 10px; }
  .tabs .t3 { width: 239px; padding-left: 14px; gap: 11px; background: #cbcdc9; }
  .t3 .pcbi { margin-bottom: 4px; color: #2fa861; stroke-width: 1.800; }
  .tabs .t4 { width: 241px; padding-left: 47px; }
  .stage { position: relative; flex: 1; min-height: 0; overflow: hidden; background: #c6c8c4; }
  .canvas { position: absolute; inset: 0; }
  .num { font-size: 16px; fill: #747a80; }
  .silk { font-family: Lato, "Open Sans", sans-serif; fill: #e0aa1e; }
  .float { position: absolute; top: 11px; background: #c5c7c3; border-radius: 6px 6px 0 0; color: #3b3c3a; }
  .fh { display: flex; align-items: center; height: 37px; padding: 0 8px 2px; gap: 9px; border-radius: 6px 6px 0 0; background: #babcb9; border-bottom: 1px solid #adafac; }
  .fh span { margin-right: auto; }
  .fh svg, .grip, .eye { fill: none; stroke: #444; stroke-width: 1.500; }
  .tools { left: 502px; width: 437px; height: 137px; }
  .tools .grid { display: grid; grid-template-columns: repeat(10, 42px); grid-auto-rows: 42px; padding: 9px 0 0 8px; }
  .grid button { display: grid; place-items: center; }
  .grid .ico { width: 27px; height: 25px; stroke-width: 1.500; }
  .lay { left: 948px; width: 371px; height: 197px; padding: 0 3px; background: #cbcdc9; }
  .lay .fh { margin: 0 -3px; }
  .ltabs { display: flex; gap: 2px; height: 36px; width: 358px; }
  .ltabs button { flex: 1 1 auto; background: #afb1ae; }
  .ltabs .on { flex: 0 0 52px; background: none; color: #1d56a3; font-weight: 700; }
  .rows { height: 118px; margin-top: 6px; overflow: hidden; width: 362px; }
  .row { display: flex; align-items: center; height: 36px; gap: 12px; background: #afb1ae; }
  .row.act { background: #cbcdc9; }
  .ln { padding-bottom: 2px; }
  .sw { display: grid; place-items: center; width: 48px; height: 36px; }
  .red { background: #d10000; }
  .blue { background: #0000cc; }
  .gold { background: #cba11b; }
  .green { background: #44a82c; }
  .grip { position: absolute; right: 2px; bottom: 0; stroke-width: 2; }

  .props { flex: none; width: 273px; overflow: hidden; }
  .sel { display: flex; height: 46px; padding: 0 15px; gap: 31px; align-items: center; background: #afb1ae; }
  h3 { display: flex; align-items: center; gap: 6px; height: 45px; margin: 0; padding-left: 12px; background: #bbbdba; font-size: 21px; font-weight: 400; }
  h3 i { width: 12px; height: 12px; background: #989a97; clip-path: polygon(100% 0, 100% 100%, 0 100%); }
  .prop { display: flex; align-items: center; justify-content: space-between; height: 45px; padding: 0 19px 0 15px; white-space: nowrap; }
  .prop > span:first-child { padding-bottom: 6px; }
  .prop input, .dd { width: 102px; height: 38px; }
  .prop input, .prop select { border: 1px solid #a9aba8; border-radius: 3px; background: transparent; color: #222; font: inherit; }
  .prop input { padding: 0 8px 1px; }
  .prop .dark { background: #000; color: #d5d7d3; border-color: #000; }
  .dd { position: relative; }
  .prop .dd select { width: 102px; height: 38px; padding: 0 34px 0 15px; appearance: none; font-size: 19px; }
  .dd svg { position: absolute; right: 6px; top: 15px; fill: none; stroke: #222; stroke-width: 2.200; }

  .dialog { position: absolute; top: 502px; left: 50%; width: 599px; height: 178px; transform: translateX(-50%); border-radius: 5px 5px 0 0; background: #f6f7f5; box-shadow: 0 0 2px #555; color: #555; }
  .dh { display: flex; align-items: center; justify-content: space-between; height: 39px; padding: 0 19px 0 17px; border-bottom: 1px solid #d2d3d1; border-radius: 5px 5px 0 0; background: #e9eae8; }
  .dh svg { fill: none; stroke: #555; stroke-width: 2; }
  .msg { display: flex; gap: 25px; padding: 15px 20px 0 18px; height: 83px; }
  .msg svg { margin-top: 2px; fill: none; stroke: #1d84c9; stroke-width: 3; }
  .msg p { margin: 0; width: 470px; line-height: 21px; }
  .acts { display: flex; gap: 7px; padding-left: 63px; }
  .acts button { display: flex; align-items: center; justify-content: center; gap: 11px; height: 42px; border-radius: 4px; color: #f4f6fa; padding-bottom: 4px; }
  .acts svg { margin-top: 3px; fill: none; stroke: currentColor; stroke-width: 1.800; }
  .yes { width: 219px; background: #4c7ad6; }
  .no { width: 253px; background: #4f89f8; }
  .cursor { position: absolute; left: 190px; top: 154px; }

  .mark-logo { position: absolute; left: 3px; top: 10px; display: flex; color: #fff; }
  .words { display: flex; flex-direction: column; margin: 23px 0 0 -5px; font: 700 20px/25px "Liberation Sans", sans-serif; }
  .words .w2 { font-size: 16px; line-height: 22px; }
</style>
